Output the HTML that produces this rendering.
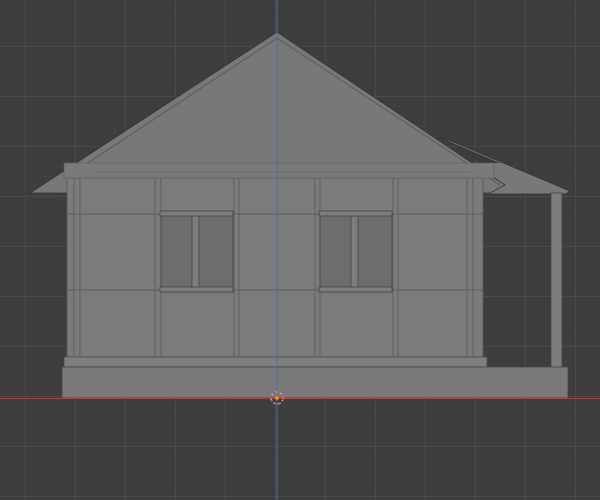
<!DOCTYPE html>
<html><head><style>html,body{margin:0;padding:0;background:#3d3d3d;width:600px;height:500px;overflow:hidden}</style></head>
<body>
<svg width="600" height="500" viewBox="0 0 600 500" xmlns="http://www.w3.org/2000/svg">
<defs>
<pattern id="mn" width="10" height="10" patternUnits="userSpaceOnUse" x="5" y="6"><path d="M0 0H10M0 0V10" stroke="#434343" stroke-width="1" fill="none"/></pattern>
<pattern id="mj" width="50" height="50" patternUnits="userSpaceOnUse" x="25" y="46"><path d="M0 0.5H50M0.5 0V50" stroke="#4a4a4a" stroke-width="1" fill="none"/></pattern>
</defs>
<rect width="600" height="500" fill="#3d3d3d"/>
<rect width="600" height="500" fill="url(#mn)"/>
<rect width="600" height="500" fill="url(#mj)"/>
<!-- porch roof -->
<polygon points="437,135 570,191 566,194 483,194 483,160" fill="#787878" stroke="#333" stroke-width="0.8"/>
<polygon points="441,138 500,163 482,163" fill="#3a3a3a"/>
<!-- porch post -->
<rect x="551" y="193" width="11" height="175" fill="#7c7c7c" stroke="#444" stroke-width="0.8"/>
<!-- main roof -->
<polygon points="277,32 505,185 490,193 30,193" fill="#787878" stroke="#333" stroke-width="0.8"/>
<polyline points="65,178 277,38 500,185" fill="none" stroke="#5a5a5a" stroke-width="1"/>
<!-- walls -->
<rect x="67" y="178" width="416" height="182" fill="#7b7b7b" stroke="#555" stroke-width="0.8"/>
<rect x="64" y="163" width="430" height="15" fill="#7a7a7a" stroke="#5c5c5c" stroke-width="0.6"/>
<line x1="95" y1="172" x2="470" y2="172" stroke="#5c5c5c" stroke-width="0.6"/>
<g stroke="#555" stroke-width="0.7" fill="none">
<line x1="67" y1="214" x2="483" y2="214"/><line x1="67" y1="290" x2="483" y2="290"/>
<line x1="74" y1="178" x2="74" y2="360"/><line x1="80" y1="178" x2="80" y2="360"/>
<line x1="155" y1="178" x2="155" y2="360"/><line x1="161" y1="178" x2="161" y2="360"/>
<line x1="234" y1="178" x2="234" y2="360"/><line x1="239" y1="178" x2="239" y2="360"/>
<line x1="315" y1="178" x2="315" y2="360"/><line x1="320" y1="178" x2="320" y2="360"/>
<line x1="393" y1="178" x2="393" y2="360"/><line x1="398" y1="178" x2="398" y2="360"/>
<line x1="467" y1="178" x2="467" y2="360"/><line x1="473" y1="178" x2="473" y2="360"/>
</g>
<!-- windows -->
<g stroke="#454545" stroke-width="0.8">
<rect x="161" y="213" width="72" height="79" fill="#6d6d6d"/>
<rect x="192" y="216" width="7" height="72" fill="#7d7d7d"/>
<rect x="160" y="211" width="73" height="5" fill="#7d7d7d"/>
<rect x="160" y="287" width="73" height="5" fill="#7d7d7d"/>
<rect x="320" y="213" width="72" height="79" fill="#6d6d6d"/>
<rect x="351" y="216" width="7" height="72" fill="#7d7d7d"/>
<rect x="319" y="211" width="73" height="5" fill="#7d7d7d"/>
<rect x="319" y="287" width="73" height="5" fill="#7d7d7d"/>
</g>
<!-- base -->
<rect x="64" y="357" width="423" height="10" fill="#7f7f7f" stroke="#4a4a4a" stroke-width="0.8"/>
<rect x="62" y="367" width="506" height="31" fill="#797979" stroke="#444" stroke-width="0.8"/>
<!-- axes -->
<line x1="277" y1="0" x2="277" y2="500" stroke="#4a6fa8" stroke-width="1"/>
<line x1="0" y1="398.5" x2="600" y2="398.5" stroke="#a3424d" stroke-width="1"/>
<circle cx="277" cy="398" r="6" fill="none" stroke="#ddd" stroke-width="1.5" stroke-dasharray="3 2"/>
<circle cx="277" cy="398" r="6" fill="none" stroke="#c44" stroke-width="1.5" stroke-dasharray="2 3"/>
<circle cx="277" cy="398" r="1.8" fill="#f90"/>
</svg>
</body></html>
